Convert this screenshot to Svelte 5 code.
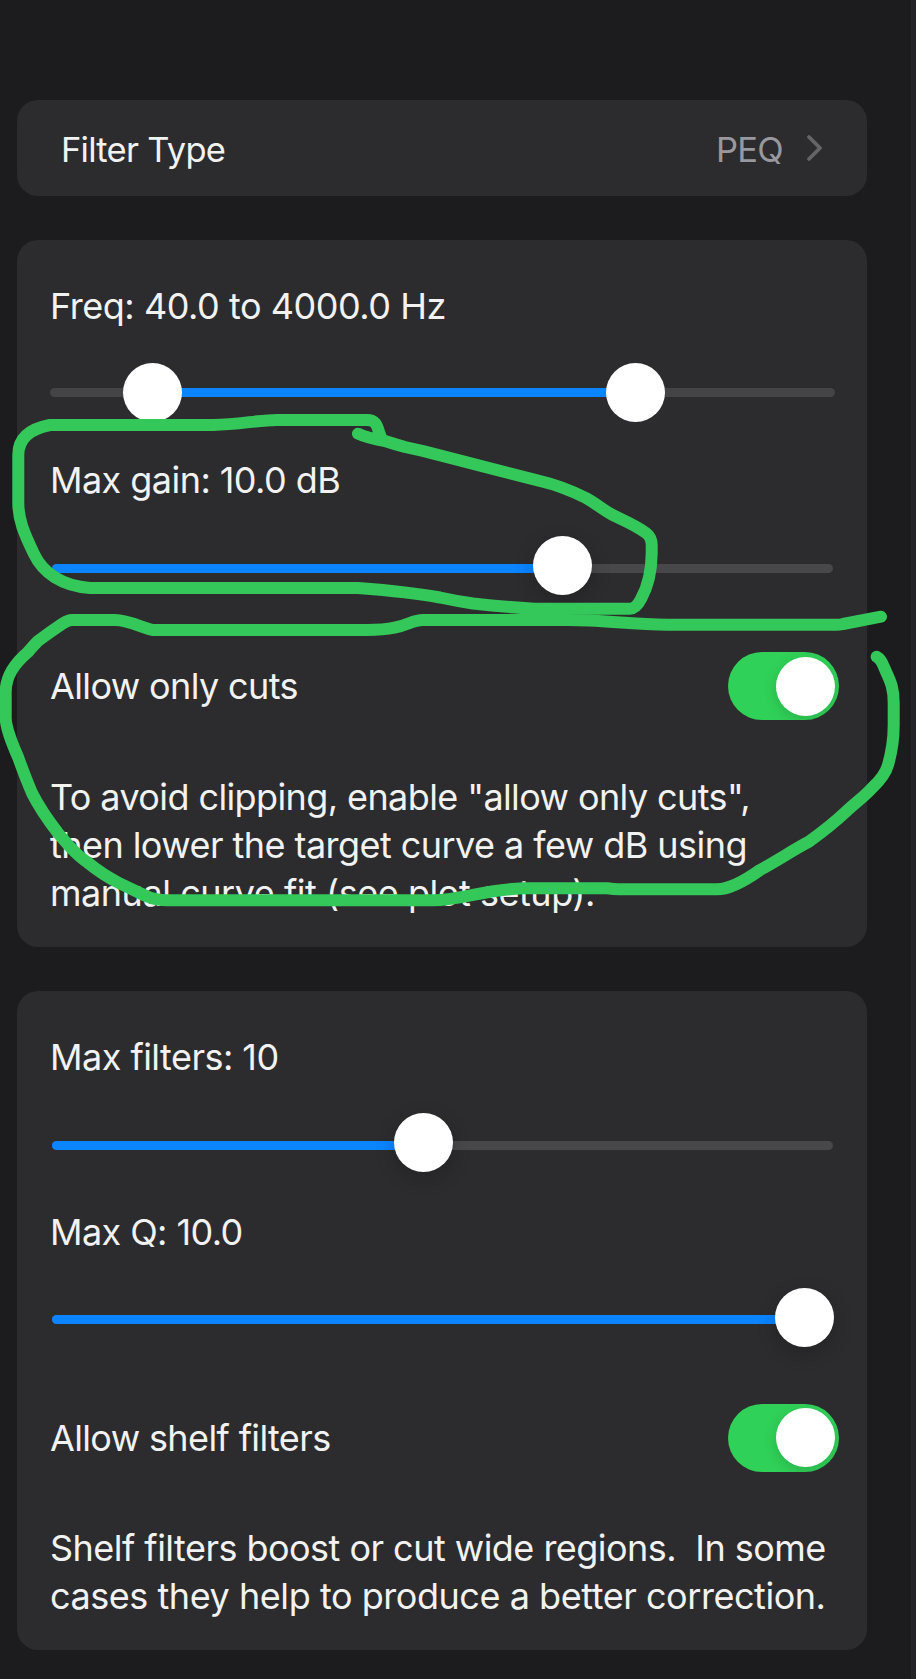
<script lang="ts">
  interface TextLine {
    text: string;
    /** Letter spacing in px */
    tracking: number;
  }

  interface Slider {
    label: TextLine;
    /** Blue part of the track, in percent of its length */
    from: number;
    to: number;
    /** Thumb centers, in percent of the slider width */
    thumbs: number[];
    range?: boolean;
  }

  interface Section {
    sliders: Slider[];
    toggle: TextLine;
    hint: TextLine[];
  }

  let filterType = $state('PEQ');

  const sections: Section[] = [
    {
      sliders: [
        {
          label: { text: 'Freq: 40.0 to 4000.0 Hz', tracking: -0.46 },
          from: 13,
          to: 74.5,
          thumbs: [13, 74.55],
          range: true
        },
        {
          label: { text: 'Max gain: 10.0 dB', tracking: -0.55 },
          from: 0,
          to: 65.4,
          thumbs: [65.35]
        }
      ],
      toggle: { text: 'Allow only cuts', tracking: -0.62 },
      hint: [
        { text: 'To avoid clipping, enable "allow only cuts",', tracking: -0.6 },
        { text: 'then lower the target curve a few dB using', tracking: -0.55 },
        { text: 'manual curve fit (see plot setup).', tracking: -0.46 }
      ]
    },
    {
      sliders: [
        {
          label: { text: 'Max filters: 10', tracking: -0.53 },
          from: 0,
          to: 47.5,
          thumbs: [47.55]
        },
        {
          label: { text: 'Max Q: 10.0', tracking: -0.58 },
          from: 0,
          to: 96.2,
          thumbs: [96.15]
        }
      ],
      toggle: { text: 'Allow shelf filters', tracking: -0.63 },
      hint: [
        { text: 'Shelf filters boost or cut wide regions.  In some', tracking: -0.53 },
        { text: 'cases they help to produce a better correction.', tracking: -0.45 }
      ]
    }
  ];

  let enabled = $state([true, true]);
</script>

<main class="screen">
  <button type="button" class="card type-row">
    <span>Filter Type</span>
    <span class="type-value">{filterType}</span>
    <svg class="chevron" viewBox="0 0 18 28" aria-hidden="true">
      <path d="M3 3 L14 14 L3 25" />
    </svg>
  </button>

  {#each sections as section, i}
    <section class="card settings">
      {#each section.sliders as slider}
        <div class="label" style="letter-spacing: {slider.label.tracking}px">{slider.label.text}</div>
        <div class="slider" class:range={slider.range}>
          <div class="track">
            <div class="fill" style="left: {slider.from}%; width: {slider.to - slider.from}%"></div>
          </div>
          {#each slider.thumbs as thumb}
            <div class="thumb" style="left: {thumb}%"></div>
          {/each}
        </div>
      {/each}

      <div class="toggle-row">
        <span style="letter-spacing: {section.toggle.tracking}px">{section.toggle.text}</span>
        <button
          type="button"
          class="toggle"
          class:on={enabled[i]}
          role="switch"
          aria-checked={enabled[i]}
          aria-label={section.toggle.text}
          onclick={() => (enabled[i] = !enabled[i])}
        >
          <span class="knob"></span>
        </button>
      </div>

      <div class="hint">
        {#each section.hint as line}
          <div style="letter-spacing: {line.tracking}px">{line.text}</div>
        {/each}
      </div>
    </section>
  {/each}

  <!-- Hand-drawn marker loops -->
  <svg class="marker" viewBox="0 0 916 1679" aria-hidden="true">
    <path
      d="M358 433.7 Q367 438 385 441 Q394 444 405 447 L423 451 L460 460.5 L489 468 L540 481
         Q562 486 586 498 C597 504 603 510 614 515.7 C625 521 635 525 646 533
         Q651.7 537 651.7 545 V553 Q651.5 580 641 599 Q636 608.7 630 608.7 H534
         Q505 607 473 603.5 Q456 601 440 597.5 Q410 592 358 588 H90
         C62 586 43 573 34 554 C24 533 18.3 520 18.3 503 V455 Q18.3 431 50 425 H213
         C240 424.5 258 420 277 420 H367 C378 420 377 428 380.5 436"
    />
    <path
      d="M881 616.7 L843 624 Q840 624.7 836 624.7 H668 C630 624 600 620 569 620 H423
         C408 620 407 630 367 630 H153 C145 629 129 620 115 620 H72 Q68 620 62 624
         Q50 632 38 641 Q34 645 28 652 C14 664 5.7 676 5.7 692 V718 Q6 730 18 757
         Q26 779 32 793 Q41 811 58 833 Q76 855 87 862 Q103 875 119 883 L146 896
         Q156 900.3 167 900.3 H433 C464 900 480 890 523 888.3 H607 Q614 889.3 619 889.3
         H717 Q733 889.3 760 870 C777 861 793 850 809 841.7 C821 833 834 823 846 811.7
         C855 803 864 797 872 788 Q885 776 888 765 Q893.7 745 893.7 725 V703
         C893.7 685 889 679 884 667 Q881 659 876.7 656.7"
    />
  </svg>
</main>

<style>
  :global(body) {
    margin: 0;
    background: #1c1c1e;
  }

  .screen {
    position: relative;
    box-sizing: border-box;
    width: 916px;
    height: 1679px;
    padding: 100px 44px 0 17.4px;
    border-right: 5px solid #242428;
    overflow: hidden;
    display: flex;
    flex-direction: column;
    background: #1c1c1e;
    color: #f2f2f2;
    font-family: Inter, "Liberation Sans", sans-serif;
    font-size: 36px;
    line-height: 48px;
  }

  .card {
    flex: none;
    box-sizing: border-box;
    border-radius: 21px;
    background: #2c2c2e;
  }

  .type-row {
    display: flex;
    align-items: center;
    width: 100%;
    height: 96px;
    padding: 4px 43px 0 43.5px;
    border: none;
    color: inherit;
    font: inherit;
    font-size: 34.5px;
    letter-spacing: -0.7px;
    text-align: left;
  }

  .type-value {
    margin-left: auto;
    color: #98989e;
  }

  .chevron {
    width: 18px;
    height: 28px;
    margin: -4px 0 0 23px;
  }

  .chevron path {
    fill: none;
    stroke: #656569;
    stroke-width: 3.8;
    stroke-linecap: round;
    stroke-linejoin: round;
  }

  .settings {
    margin-top: 43.5px;
    padding: 42.5px 28px 29.5px 32.6px;
  }

  .settings + .settings {
    margin-top: 44px;
  }

  .label {
    white-space: nowrap;
  }

  .slider {
    position: relative;
    display: flex;
    align-items: center;
    width: 785px;
    height: 59px;
    margin: 32px 0 35.5px;
  }

  .slider.range {
    margin: 32.5px 0 34.5px;
  }

  .track {
    position: relative;
    flex: 1;
    height: 9px;
    margin: 5px 2px 0;
    border-radius: 5px;
    background: #48484b;
    overflow: hidden;
  }

  .range .track {
    margin: 0;
    background: #444446;
  }

  .fill {
    position: absolute;
    top: 0;
    bottom: 0;
    background: #0a84ff;
  }

  .thumb {
    position: absolute;
    top: 0;
    width: 59px;
    height: 59px;
    margin-left: -29.5px;
    border-radius: 50%;
    background: #fff;
    box-shadow: 0 6px 20px rgba(0, 0, 0, 0.2);
  }

  .range .thumb {
    box-shadow: none;
  }

  .toggle-row {
    display: flex;
    align-items: center;
    justify-content: space-between;
    height: 68px;
    margin-top: 57px;
  }

  .toggle {
    display: flex;
    box-sizing: border-box;
    width: 111px;
    height: 68px;
    padding: 4.5px;
    border: none;
    border-radius: 34px;
    background: #39393d;
    overflow: hidden;
  }

  .toggle.on {
    justify-content: flex-end;
    background: #30d158;
  }

  .knob {
    width: 59px;
    height: 59px;
    border-radius: 50%;
    background: #fff;
    box-shadow: 0 4px 14px rgba(0, 0, 0, 0.15);
  }

  .hint {
    margin-top: 52.5px;
    line-height: 48.2px;
    white-space: pre;
  }

  .marker {
    position: absolute;
    top: 0;
    left: 0;
    width: 916px;
    height: 1679px;
    pointer-events: none;
  }

  .marker path {
    fill: none;
    stroke: #34c759;
    stroke-width: 12;
    stroke-linecap: round;
    stroke-linejoin: round;
  }
</style>
